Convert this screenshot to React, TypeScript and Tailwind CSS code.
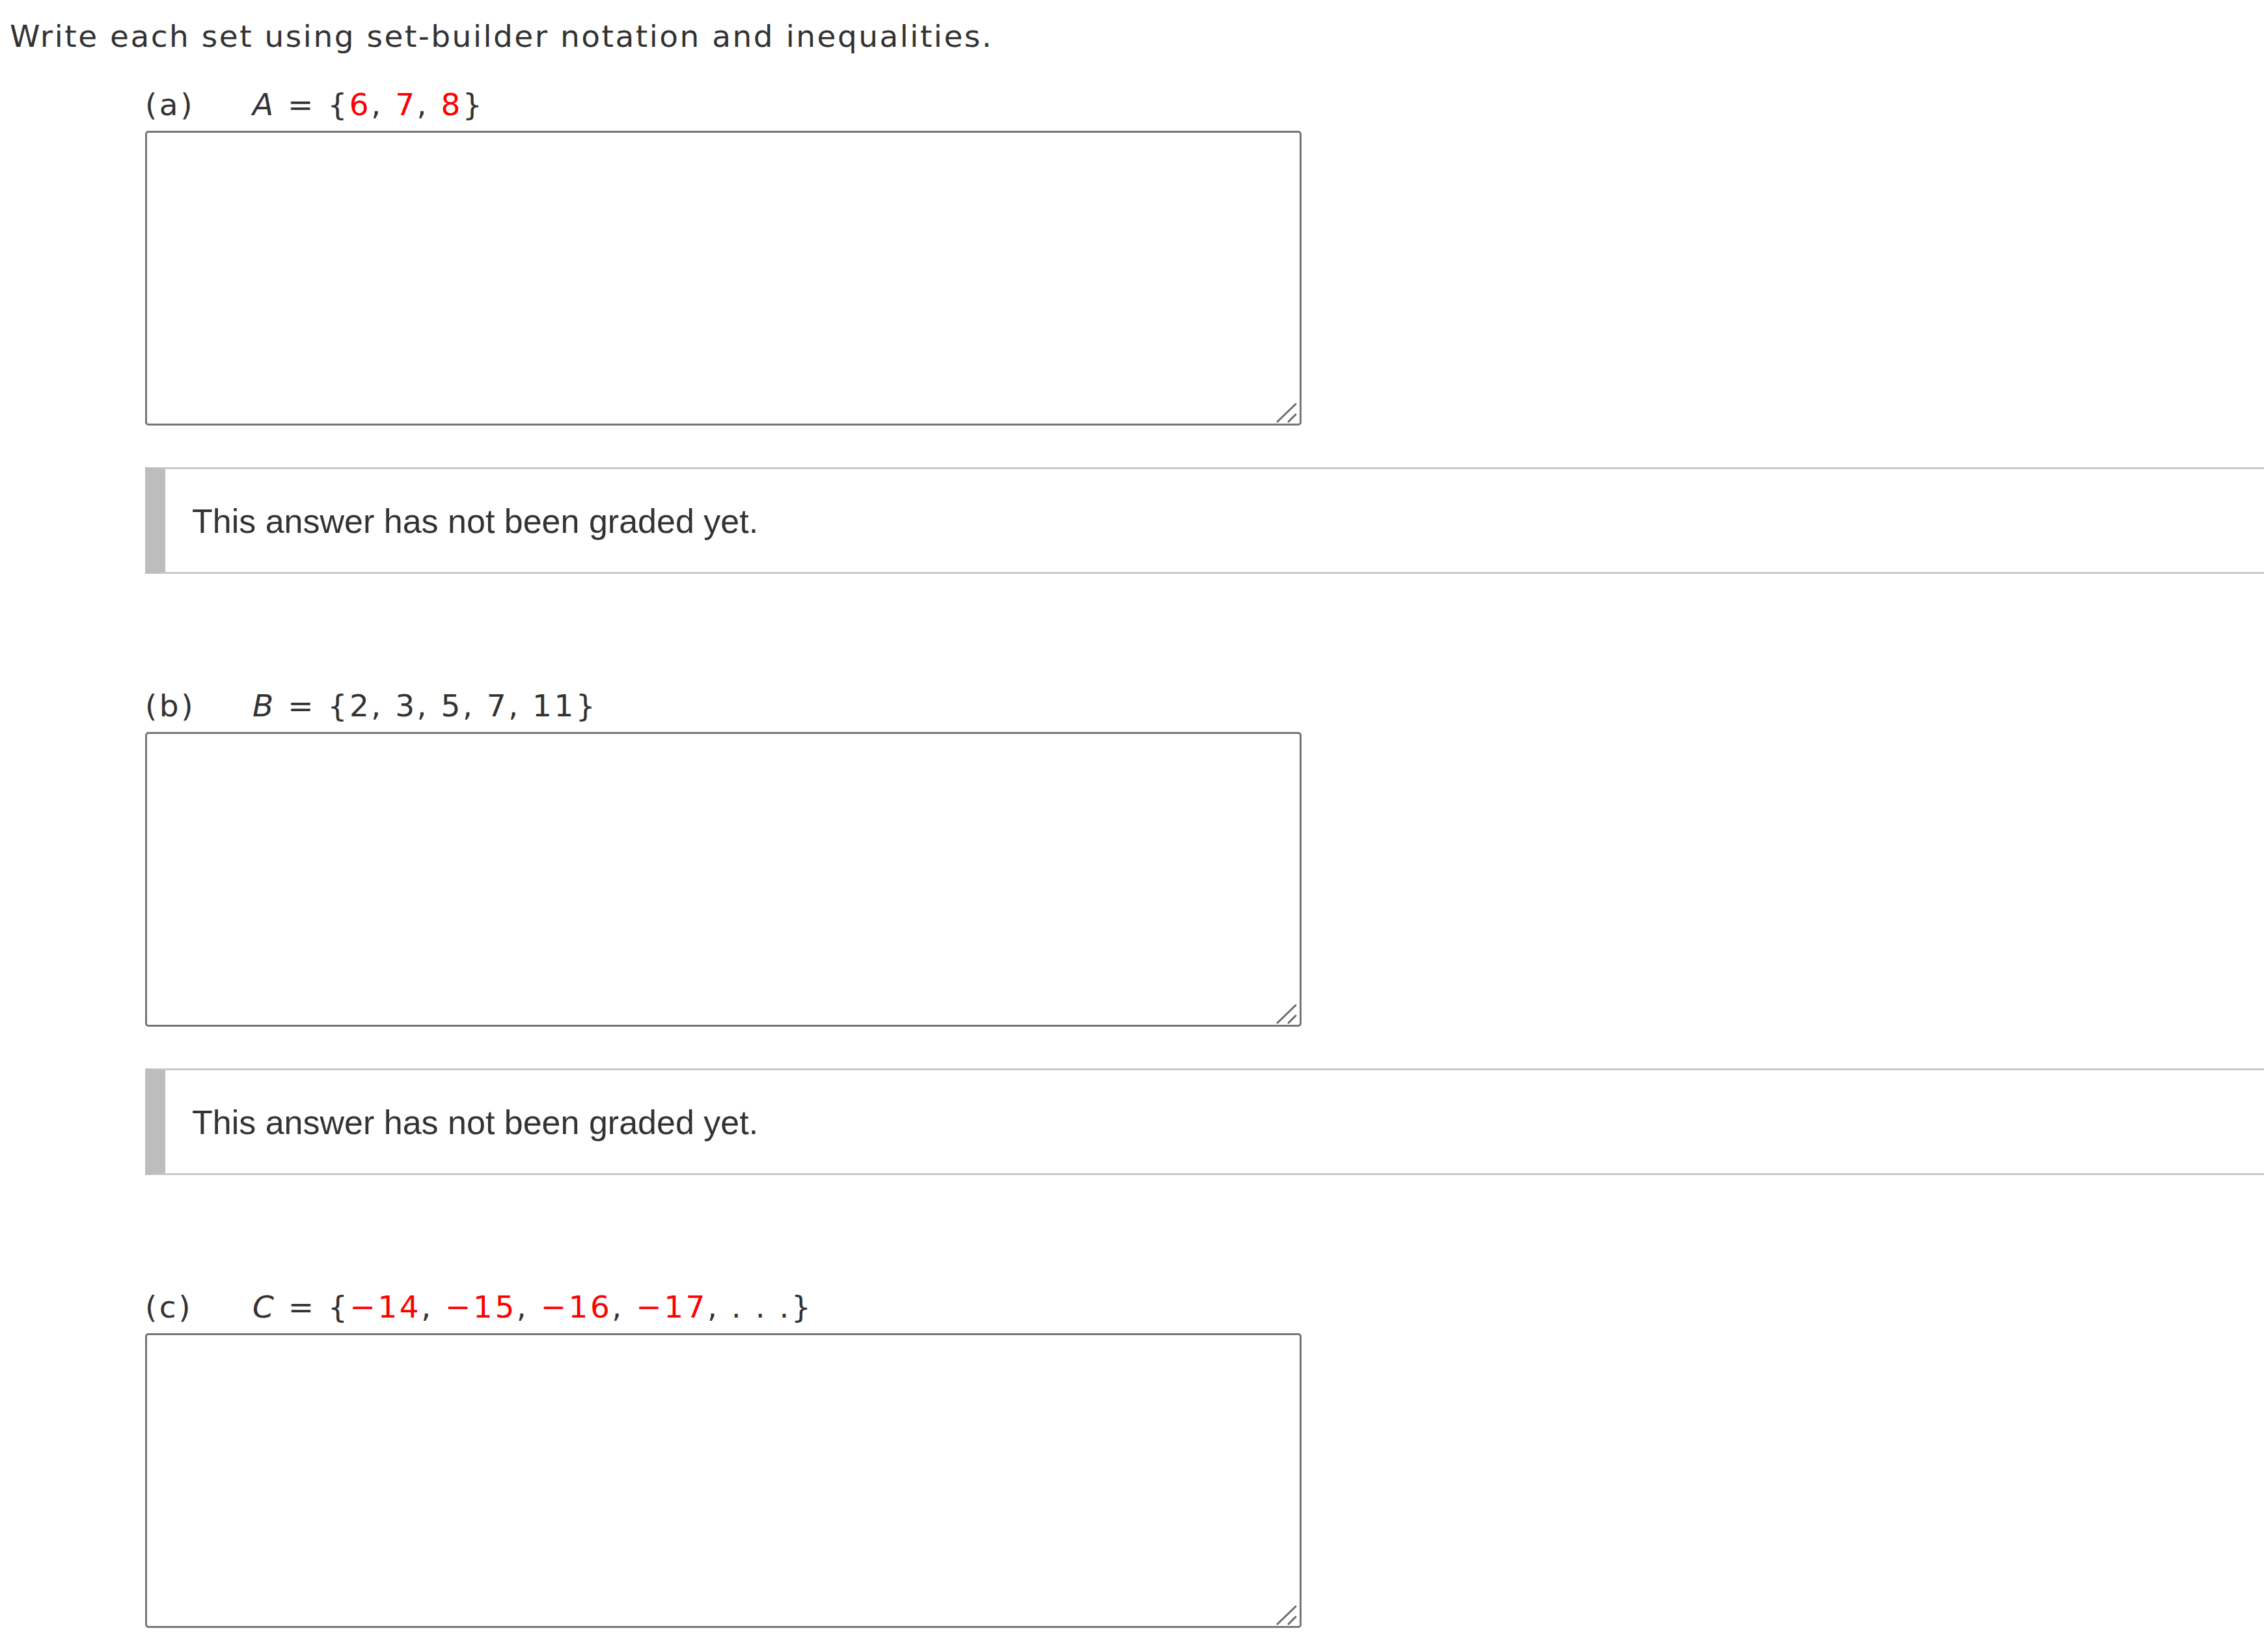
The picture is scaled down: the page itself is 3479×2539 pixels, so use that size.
import React from "react";

type Part = { text: string; red?: boolean };

interface Question {
  label: string;
  variable: string;
  parts: Part[];
  graded: boolean;
}

const questions: Question[] = [
  {
    label: "(a)",
    variable: "A",
    parts: [
      { text: "{" },
      { text: "6", red: true },
      { text: ", " },
      { text: "7", red: true },
      { text: ", " },
      { text: "8", red: true },
      { text: "}" },
    ],
    graded: true,
  },
  {
    label: "(b)",
    variable: "B",
    parts: [{ text: "{2, 3, 5, 7, 11}" }],
    graded: true,
  },
  {
    label: "(c)",
    variable: "C",
    parts: [
      { text: "{" },
      { text: "\u221214", red: true },
      { text: ", " },
      { text: "\u221215", red: true },
      { text: ", " },
      { text: "\u221216", red: true },
      { text: ", " },
      { text: "\u221217", red: true },
      { text: ", . . .}" },
    ],
    graded: false,
  },
];

function ResizeGrip() {
  return (
    <svg
      className="pointer-events-none absolute bottom-0 right-0"
      width="40"
      height="40"
      viewBox="0 0 40 40"
    >
      <line x1="3" y1="34" x2="31" y2="7" stroke="#6b6b6b" strokeWidth="3" strokeLinecap="round" />
      <line x1="20" y1="34" x2="31" y2="23" stroke="#6b6b6b" strokeWidth="3" strokeLinecap="round" />
    </svg>
  );
}

function QuestionBlock({ q }: { q: Question }) {
  return (
    <div className="pl-[223px]">
      {/* Prompt line */}
      <div className="flex leading-[56px] tracking-[3.5px] text-[#333]">
        <span className="w-[165px] shrink-0">{q.label}</span>
        <span>
          <i>{q.variable}</i> ={" "}
          {q.parts.map((p, i) => (
            <span key={i} className={p.red ? "text-[#ff0000]" : ""}>
              {p.text}
            </span>
          ))}
        </span>
      </div>

      {/* Answer box */}
      <div className="relative mt-[12px] h-[453px] w-[1777px]">
        <textarea className="block h-full w-full resize-none rounded-[5px] border-[3px] border-[#767676] bg-white outline-none" />
        <ResizeGrip />
      </div>

      {/* Grading status */}
      {q.graded && (
        <div className="mt-[64px] mb-[175px] flex h-[164px] items-center border-y-[3px] border-[#c8c8c8] border-l-[31px] border-l-[#bdbdbd] bg-white pl-[41px] pt-[2px]">
          <span className="font-['Liberation_Sans',Arial,sans-serif] text-[52px] leading-[60px] text-[#333]">
            This answer has not been graded yet.
          </span>
        </div>
      )}
    </div>
  );
}

export default function App() {
  return (
    <div className="min-h-screen bg-white font-['DejaVu_Sans',Verdana,sans-serif] text-[47px]">
      <div className="pt-[28px]">
        <p className="pl-[15px] leading-[56px] tracking-[2.5px] text-[#333]">
          Write each set using set-builder notation and inequalities.
        </p>
        <div className="mt-[49px]">
          {questions.map((q) => (
            <QuestionBlock key={q.label} q={q} />
          ))}
        </div>
      </div>
    </div>
  );
}
